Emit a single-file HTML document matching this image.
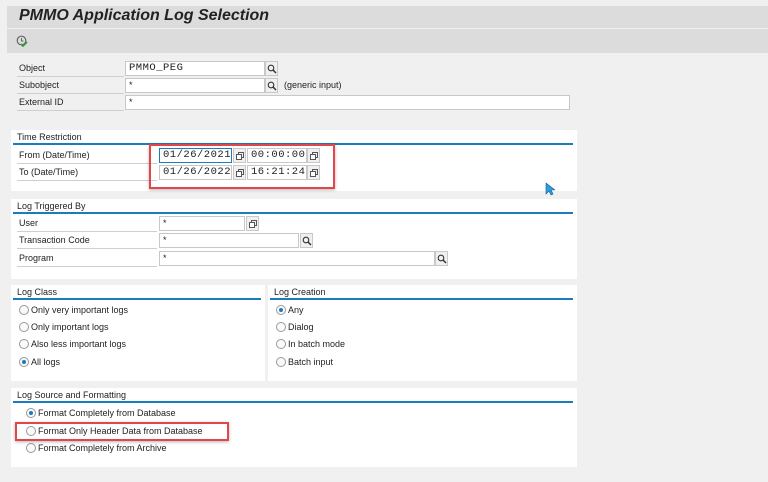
<!DOCTYPE html><html><head><style>
body{margin:0;width:768px;height:482px;background:#f0f0f0;font-family:"Liberation Sans",sans-serif;font-size:9px;color:#222;position:relative;overflow:hidden}
div{position:absolute;box-sizing:border-box}
.bar{background:#dcdcdc}
.lbl{border-bottom:1px solid #cfcfcf;padding-left:2px;line-height:15px;height:16px}
.in{background:#fff;border:1px solid #c8c8c8;height:15px;line-height:13px;padding-left:3px;font-size:9px}
.mono{font-family:"Liberation Mono",monospace;font-size:10.5px;letter-spacing:.5px;line-height:13px}
.btn{background:#f0f0f0;border:1px solid #c8c8c8;width:13px;height:15px}
.btn svg{position:absolute;left:1px;top:2px}
.pan{background:#fff}
.hd{left:2px;right:4px;height:14px;border-bottom:2px solid #1b7bbf;padding-left:4px;line-height:12px;font-size:9px}
.r{height:12px;line-height:12px;padding-left:12px}
.r:before{content:"";position:absolute;left:0;top:1px;width:8px;height:8px;border:1px solid #999;border-radius:50%;background:#fafafa}
.r.on:after{content:"";position:absolute;left:3px;top:4px;width:4px;height:4px;border-radius:50%;background:#1b7bbf}
.red{border:2px solid #e0464a;box-shadow:0 1px 3px rgba(0,0,0,.3)}
</style></head><body>
<div class="bar" style="left:7px;top:6px;width:761px;height:22px"></div>
<div style="left:19px;top:5px;font-size:16px;font-weight:bold;font-style:italic;line-height:22px">PMMO Application Log Selection</div>
<div class="bar" style="left:7px;top:29px;width:761px;height:24px"></div>
<svg style="position:absolute;left:16px;top:35px" width="12" height="12" viewBox="0 0 12 12"><circle cx="5.5" cy="5.5" r="4.3" fill="none" stroke="#666" stroke-width="1.2"/><path d="M5.5 3v3h2" stroke="#666" fill="none"/><path d="M5 9l2 2 4-4" stroke="#3a9a3a" stroke-width="1.8" fill="none"/></svg>

<div class="lbl" style="left:17px;top:61px;width:107px">Object</div>
<div class="in mono" style="left:125px;top:61px;width:140px">PMMO_PEG</div><div class="btn" style="left:265px;top:61px"><svg width="10" height="10" viewBox="0 0 10 10"><circle cx="4" cy="4" r="2.8" fill="none" stroke="#333" stroke-width="1.1"/><path d="M6 6l3 3" stroke="#333" stroke-width="1.5"/></svg></div>
<div class="lbl" style="left:17px;top:78px;width:107px">Subobject</div>
<div class="in" style="left:125px;top:78px;width:140px">*</div><div class="btn" style="left:265px;top:78px"><svg width="10" height="10" viewBox="0 0 10 10"><circle cx="4" cy="4" r="2.8" fill="none" stroke="#333" stroke-width="1.1"/><path d="M6 6l3 3" stroke="#333" stroke-width="1.5"/></svg></div>
<div style="left:284px;top:80px">(generic input)</div>
<div class="lbl" style="left:17px;top:95px;width:107px">External ID</div>
<div class="in" style="left:125px;top:95px;width:445px">*</div>

<div class="pan" style="left:11px;top:130px;width:566px;height:61px"><div class="hd" style="top:1px">Time Restriction</div></div>
<div class="lbl" style="left:17px;top:148px;width:140px">From (Date/Time)</div>
<div class="lbl" style="left:17px;top:165px;width:140px">To (Date/Time)</div>
<div class="in mono" style="left:159px;top:148px;width:73px;border-color:#1b7bbf">01/26/2021</div><div class="btn" style="left:233px;top:148px"><svg width="10" height="10" viewBox="0 0 10 10"><rect x="1.5" y="3.5" width="5" height="5" fill="#fff" stroke="#555"/><path d="M3.5 3.5v-2h5v5h-2" fill="none" stroke="#555"/></svg></div>
<div class="in mono" style="left:247px;top:148px;width:60px">00:00:00</div><div class="btn" style="left:307px;top:148px"><svg width="10" height="10" viewBox="0 0 10 10"><rect x="1.5" y="3.5" width="5" height="5" fill="#fff" stroke="#555"/><path d="M3.5 3.5v-2h5v5h-2" fill="none" stroke="#555"/></svg></div>
<div class="in mono" style="left:159px;top:165px;width:73px">01/26/2022</div><div class="btn" style="left:233px;top:165px"><svg width="10" height="10" viewBox="0 0 10 10"><rect x="1.5" y="3.5" width="5" height="5" fill="#fff" stroke="#555"/><path d="M3.5 3.5v-2h5v5h-2" fill="none" stroke="#555"/></svg></div>
<div class="in mono" style="left:247px;top:165px;width:60px">16:21:24</div><div class="btn" style="left:307px;top:165px"><svg width="10" height="10" viewBox="0 0 10 10"><rect x="1.5" y="3.5" width="5" height="5" fill="#fff" stroke="#555"/><path d="M3.5 3.5v-2h5v5h-2" fill="none" stroke="#555"/></svg></div>
<div class="red" style="left:149px;top:144px;width:186px;height:45px"></div>

<div class="pan" style="left:11px;top:199px;width:566px;height:80px"><div class="hd" style="top:1px">Log Triggered By</div></div>
<div class="lbl" style="left:17px;top:216px;width:140px">User</div>
<div class="in" style="left:159px;top:216px;width:86px">*</div><div class="btn" style="left:246px;top:216px"><svg width="10" height="10" viewBox="0 0 10 10"><rect x="1.5" y="3.5" width="5" height="5" fill="#fff" stroke="#555"/><path d="M3.5 3.5v-2h5v5h-2" fill="none" stroke="#555"/></svg></div>
<div class="lbl" style="left:17px;top:233px;width:140px">Transaction Code</div>
<div class="in" style="left:159px;top:233px;width:140px">*</div><div class="btn" style="left:300px;top:233px"><svg width="10" height="10" viewBox="0 0 10 10"><circle cx="4" cy="4" r="2.8" fill="none" stroke="#333" stroke-width="1.1"/><path d="M6 6l3 3" stroke="#333" stroke-width="1.5"/></svg></div>
<div class="lbl" style="left:17px;top:251px;width:140px">Program</div>
<div class="in" style="left:159px;top:251px;width:276px">*</div><div class="btn" style="left:435px;top:251px"><svg width="10" height="10" viewBox="0 0 10 10"><circle cx="4" cy="4" r="2.8" fill="none" stroke="#333" stroke-width="1.1"/><path d="M6 6l3 3" stroke="#333" stroke-width="1.5"/></svg></div>

<div class="pan" style="left:11px;top:285px;width:254px;height:96px"><div class="hd" style="top:1px">Log Class</div></div>
<div class="pan" style="left:268px;top:285px;width:309px;height:96px"><div class="hd" style="top:1px">Log Creation</div></div>
<div class="r" style="left:19px;top:304px">Only very important logs</div>
<div class="r" style="left:19px;top:321px">Only important logs</div>
<div class="r" style="left:19px;top:338px">Also less important logs</div>
<div class="r on" style="left:19px;top:356px">All logs</div>
<div class="r on" style="left:276px;top:304px">Any</div>
<div class="r" style="left:276px;top:321px">Dialog</div>
<div class="r" style="left:276px;top:338px">In batch mode</div>
<div class="r" style="left:276px;top:356px">Batch input</div>

<div class="pan" style="left:11px;top:388px;width:566px;height:79px"><div class="hd" style="top:1px">Log Source and Formatting</div></div>
<div class="r on" style="left:26px;top:407px">Format Completely from Database</div>
<div class="r" style="left:26px;top:425px">Format Only Header Data from Database</div>
<div class="r" style="left:26px;top:442px">Format Completely from Archive</div>
<div class="red" style="left:15px;top:422px;width:214px;height:19px"></div>

<svg style="position:absolute;left:545px;top:182px" width="10" height="14" viewBox="0 0 10 14"><path d="M1 1v11l3-3 2 4 2-1-2-4h4z" fill="#2a9ee0" stroke="#1a5a90" stroke-width=".6"/></svg>
</body></html>
